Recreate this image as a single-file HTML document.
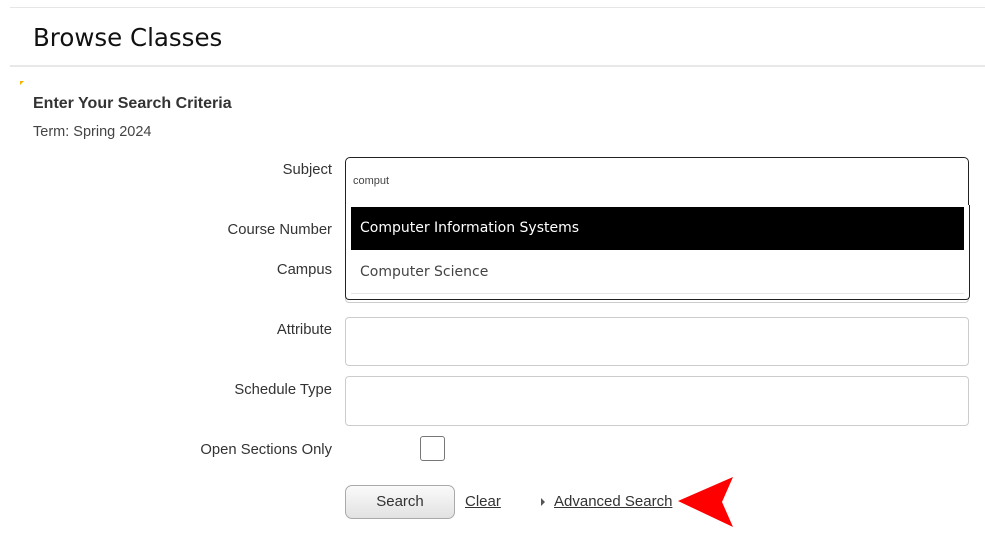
<!DOCTYPE html>
<html><head><style>
body{margin:0;width:985px;height:538px;background:#fff;font-family:"Liberation Sans",Arial,sans-serif;position:relative;overflow:hidden;color:#333}
.a{position:absolute}
.lbl{position:absolute;right:653px;font-size:14.8px;color:#333;text-align:right;white-space:nowrap}
.box{position:absolute;left:345px;width:622px;border:1px solid #ccc;border-radius:4px;background:#fff}
u{color:#333}
</style></head><body>
<div class="a" style="left:10px;top:7px;width:975px;height:1px;background:#e6e6e6"></div>
<div class="a" style="left:33px;top:23px;font-family:'DejaVu Sans',sans-serif;font-size:24.5px;color:#111">Browse Classes</div>
<div class="a" style="left:10px;top:65px;width:975px;height:2px;background:#e8e8e8"></div>
<div class="a" style="left:20px;top:81px;width:0;height:0;border-top:4px solid #f0b400;border-right:4px solid transparent"></div>
<div class="a" style="left:33px;top:95px;font-size:16px;font-weight:bold;color:#333">Enter Your Search Criteria</div>
<div class="a" style="left:33px;top:124px;font-size:14.5px;color:#444">Term: Spring 2024</div>

<div class="lbl" style="top:162px">Subject</div>
<div class="lbl" style="top:222px">Course Number</div>
<div class="lbl" style="top:262px">Campus</div>
<div class="lbl" style="top:322px">Attribute</div>
<div class="lbl" style="top:382px">Schedule Type</div>
<div class="lbl" style="top:442px">Open Sections Only</div>

<div class="box" style="top:255px;height:46px"></div>
<div class="box" style="top:317px;height:47px"></div>
<div class="box" style="top:376px;height:48px"></div>

<div class="box" style="top:157px;height:48px;border-color:#222;border-radius:5px 5px 0 0"><div class="a" style="left:7px;top:17px;font-size:11px;color:#444">comput</div></div>
<div class="a" style="left:345px;top:205px;width:623px;height:94px;border:1px solid #222;border-top:none;border-radius:0 0 4px 4px;background:#fff;font-family:'DejaVu Sans',sans-serif;font-size:14px">
<div class="a" style="left:5px;top:2px;width:613px;height:43px;background:#000;color:#fff"><span class="a" style="left:9px;top:13px">Computer Information Systems</span></div>
<div class="a" style="left:14px;top:59px;color:#444">Computer Science</div>
<div class="a" style="left:5px;top:88px;width:613px;height:1px;background:#e5e5e5"></div>
</div>

<div class="a" style="left:420px;top:436px;width:23px;height:23px;border:1px solid #777;border-radius:3px"></div>
<div class="a" style="left:345px;top:485px;width:108px;height:32px;border:1px solid #aaa;border-radius:7px;background:linear-gradient(#fafafa,#e2e2e2);font-size:15px;text-align:center;line-height:32px;color:#333">Search</div>
<div class="a" style="left:465px;top:493px;font-size:15px"><u>Clear</u></div>
<div class="a" style="left:541px;top:498px;width:0;height:0;border-left:4px solid #555;border-top:4px solid transparent;border-bottom:4px solid transparent"></div>
<div class="a" style="left:554px;top:493px;font-size:15px"><u>Advanced Search</u></div>
<svg class="a" style="left:670px;top:470px" width="70" height="62"><polygon points="8,31 63,7 52,32 63,57" fill="#f00"/></svg>
</body></html>
